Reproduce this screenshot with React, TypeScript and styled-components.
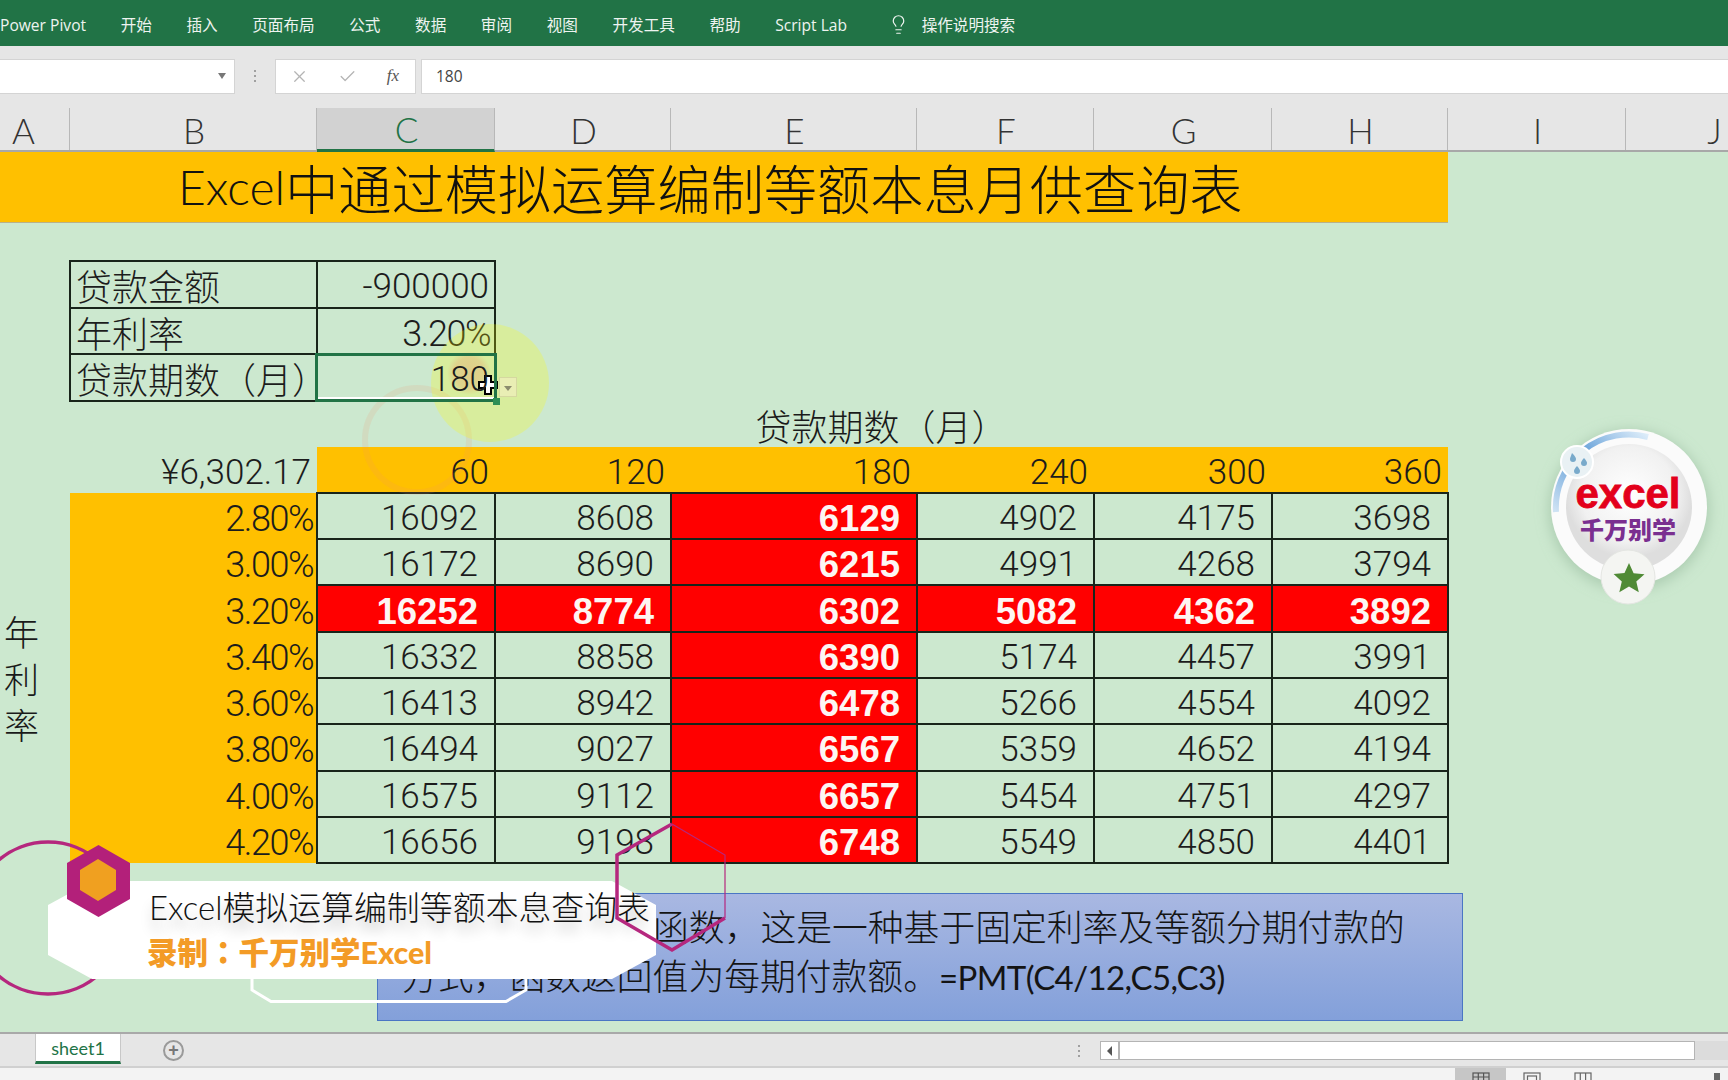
import React from "react";
import styled, { createGlobalStyle } from "styled-components";
import { Lightbulb, X, Check } from "lucide-react";

const CJK = `"Noto Sans CJK SC", sans-serif`;
const NUM = `Roboto, "Liberation Sans", "Noto Sans CJK SC", sans-serif`;
const BOLDNUM = `"Liberation Sans", "Noto Sans CJK SC", sans-serif`;
const LAT = `Lato, "Noto Sans CJK SC", sans-serif`;
const GREEN = "#217346";

const Global = createGlobalStyle`
  html, body { margin: 0; padding: 0; background: #cce8cf; overflow: hidden; }
  * { box-sizing: border-box; }
`;

const Page = styled.div`
  position: relative;
  width: 1728px;
  height: 1080px;
  overflow: hidden;
  display: flex;
  flex-direction: column;
  font-family: ${CJK};
  color: #1a1a1a;
`;

const Ribbon = styled.div`
  height: 46px;
  flex: none;
  background: ${GREEN};
  display: flex;
  align-items: center;
  gap: 34.6px;
  padding-top: 3px;
  color: #eef4f0;
  font: 15.6px ${`"Open Sans", "Noto Sans CJK SC", sans-serif`};
`;
const RibbonItem = styled.span`
  white-space: nowrap;
  display: inline-flex;
  align-items: center;
  gap: 13px;
`;
const SearchItem = styled(RibbonItem)`
  margin-left: 6px;
`;

const FormulaRow = styled.div`
  height: 62px;
  flex: none;
  background: #e6e6e6;
  display: flex;
  align-items: center;
  padding-bottom: 2px;
`;
const NameBox = styled.div`
  width: 235px;
  height: 35px;
  background: #fff;
  border: 1px solid #d4d4d4;
  border-left: 0;
  display: flex;
  align-items: center;
  justify-content: flex-end;
  padding-right: 8px;
`;
const Caret = styled.span`
  width: 0;
  height: 0;
  border-left: 4px solid transparent;
  border-right: 4px solid transparent;
  border-top: 6px solid #777;
`;
const Grip = styled.div`
  width: 40px;
  display: flex;
  flex-direction: column;
  align-items: center;
  gap: 3px;
`;
const GripDot = styled.i`
  width: 2px;
  height: 2px;
  background: #a0a0a0;
`;
const FxButtons = styled.div`
  width: 141px;
  height: 35px;
  background: #fff;
  border: 1px solid #d4d4d4;
  display: flex;
  align-items: center;
  justify-content: space-between;
  padding: 0 16px 0 14px;
  color: #b4b4b4;
`;
const FxMark = styled.span`
  font: italic 17px "Liberation Serif", serif;
  color: #555;
`;
const FormulaInput = styled.div`
  flex: 1;
  height: 35px;
  margin-left: 5px;
  background: #fff;
  border: 1px solid #d4d4d4;
  border-right: 0;
  display: flex;
  align-items: center;
  padding-left: 14px;
  font: 15.5px "Open Sans", sans-serif;
  color: #444;
`;

const COLS = "70px 247px 178px 176px 246px 177px 178px 176px";

const Headers = styled.div`
  height: 44px;
  flex: none;
  display: grid;
  grid-template-columns: ${COLS} 178px 176px;
  background: #e6e6e6;
  border-bottom: 2px solid #a8a8a8;
`;
const Head = styled.div<{ $active?: boolean; $shift?: number }>`
  display: flex;
  align-items: flex-end;
  justify-content: center;
  font: 300 35px/40px Lato, sans-serif;
  padding-left: 2px;
  padding-right: ${(p) => p.$shift ?? 0}px;
  color: ${(p) => (p.$active ? GREEN : "#333")};
  background: ${(p) => (p.$active ? "#d2d2d2" : "transparent")};
  border-right: 1px solid #b8b8b8;
  margin-bottom: ${(p) => (p.$active ? -2 : 0)}px;
  border-bottom: ${(p) => (p.$active ? `3px solid ${GREEN}` : "0")};
`;

const Sheet = styled.div`
  flex: 1;
  background: #cce8cf;
  display: grid;
  grid-template-columns: ${COLS};
  grid-template-rows: 71px 38px 46.5px 46.5px 46.5px 46px repeat(9, 46.3px) 1fr;
  align-content: start;
  overflow: hidden;
`;
const Title = styled.div`
  grid-column: 1 / -1;
  background: #ffc000;
  border-bottom: 1px solid #b9b08a;
  display: flex;
  align-items: center;
  padding-left: 178px;
  font: 300 53.2px/60px ${CJK};
  color: #111;
  white-space: nowrap;
`;
const TitleLatin = styled.span`
  font: 300 48px/60px ${LAT};
`;
const Gap = styled.div`
  grid-column: 1 / -1;
`;
const RowRest = styled.div`
  grid-column: 4 / -1;
`;
const Cell = styled.div<{ $right?: boolean; $boxed?: boolean; $fill?: string; $pad?: number }>`
  display: flex;
  align-items: center;
  justify-content: ${(p) => (p.$right ? "flex-end" : "flex-start")};
  padding: 6px ${(p) => p.$pad ?? 6}px 0 6px;
  font: 300 35px/38px ${NUM};
  color: #1c1c1c;
  white-space: nowrap;
  background: ${(p) => p.$fill ?? "transparent"};
  outline: ${(p) => (p.$boxed ? "2px solid #18241a" : "0")};
  outline-offset: -1px;
`;
const HotCell = styled(Cell)`
  font: bold 36.5px/38px ${BOLDNUM};
  color: #fdf6f3;
  background: #ff0000;
`;
const LabelCell = styled(Cell)`
  grid-column: 2;
  padding-top: 2px;
  font: 300 36px/42px ${CJK};
`;
const RateCell = styled(Cell)`
  grid-column: 2;
  padding-right: 4px;
  font: 300 36px/38px ${NUM};
  letter-spacing: -1.5px;
  background: #ffc000;
`;
const PercentValue = styled(Cell)`
  font: 300 36px/38px ${NUM};
  letter-spacing: -1.5px;
  padding-right: 5px;
`;
const SumCell = styled(Cell)`
  grid-column: 2;
  padding-right: 6px;
`;
const ActiveCell = styled(Cell)`
  position: relative;
  z-index: 2;
`;
const ActiveFrame = styled.div`
  position: absolute;
  inset: -1px -2px -1px -2px;
  border: 3px solid ${GREEN};
  box-shadow: inset 0 -2px 0 #fff;
  pointer-events: none;
`;
const FillHandle = styled.i`
  position: absolute;
  right: -5px;
  bottom: -4px;
  width: 7px;
  height: 7px;
  background: #2f8f55;
`;
const SpanHeader = styled.div`
  grid-column: 3 / -1;
  display: flex;
  align-items: center;
  justify-content: center;
  padding: 2px 2px 0 0;
  font: 300 36px/42px ${CJK};
`;
const RateSide = styled.div`
  grid-row: 8 / span 8;
  grid-column: 1;
  display: flex;
  flex-direction: column;
  justify-content: center;
  padding-left: 4px;
  font: 300 35px/46.4px ${CJK};
`;
const NoteRow = styled.div`
  grid-column: 1 / -1;
  padding: 30px 0 0 377px;
`;
const Note = styled.div`
  width: 1086px;
  height: 128px;
  border: 1.5px solid #4a76c4;
  background: linear-gradient(#a9b8e2, #83a0da);
  padding: 7px 0 0 24px;
  font: 300 35.8px/49px ${CJK};
  color: #141414;
  white-space: nowrap;
`;
const NoteLine = styled.div<{ $indent?: number }>`
  padding-left: ${(p) => p.$indent ?? 0}px;
`;
const Formula = styled.span`
  font: 33px/49px ${LAT};
  letter-spacing: -0.6px;
`;

const TabBar = styled.div`
  height: 36px;
  flex: none;
  background: #e6e6e6;
  border-top: 2px solid #a9a9a9;
  border-bottom: 2px solid #d0d0d0;
  display: flex;
  align-items: flex-start;
`;
const SheetTab = styled.div`
  margin-left: 35px;
  width: 86px;
  height: 30px;
  background: #fff;
  border-bottom: 3px solid ${GREEN};
  border-left: 1px solid #c8c8c8;
  border-right: 1px solid #c8c8c8;
  color: ${GREEN};
  font: 18px Lato, sans-serif;
  display: flex;
  align-items: center;
  justify-content: center;
`;
const AddSheet = styled.div`
  margin: 6px 0 0 42px;
  width: 21px;
  height: 21px;
  border: 2px solid #9a9a9a;
  border-radius: 50%;
  color: #777;
  font: bold 18px/16px "Liberation Sans", sans-serif;
  text-align: center;
`;
const TabSpacer = styled.div`
  flex: 1;
`;
const ScrollGrip = styled(Grip)`
  width: 10px;
  margin: 11px 16px 0 0;
`;
const Scrollbar = styled.div`
  width: 595px;
  height: 19px;
  margin-top: 7px;
  background: #fff;
  border: 1px solid #b4b4b4;
  display: flex;
`;
const ScrollBtn = styled.div`
  width: 19px;
  border-right: 2px solid #b4b4b4;
  display: flex;
  align-items: center;
  justify-content: center;
`;
const ScrollLeft = styled.span`
  width: 0;
  height: 0;
  border-top: 5px solid transparent;
  border-bottom: 5px solid transparent;
  border-right: 5px solid #555;
`;
const ScrollTail = styled.div`
  width: 33px;
  height: 19px;
  margin-top: 7px;
  background: #dcdcdc;
`;
const Status = styled.div`
  height: 12px;
  flex: none;
  background: #f3f3f3;
  display: flex;
  justify-content: flex-end;
  overflow: hidden;
`;
const ViewBtn = styled.div<{ $on?: boolean }>`
  width: 51px;
  height: 12px;
  background: ${(p) => (p.$on ? "#c6c6c6" : "transparent")};
  display: flex;
  justify-content: center;
  padding-top: 4px;
`;
const StatusTail = styled.div`
  width: 120px;
  display: flex;
  justify-content: flex-end;
  padding: 5px 8px 0 0;
`;
const Slider = styled.i`
  width: 6px;
  height: 7px;
  background: #666;
`;

const Overlay = styled.div`
  position: absolute;
  inset: 0;
  pointer-events: none;
`;
const Art = styled.svg`
  position: absolute;
  left: 0;
  top: 0;
  width: 1728px;
  height: 1080px;
`;
const Banner = styled.div`
  position: absolute;
  left: 48px;
  top: 881px;
  width: 608px;
  height: 98px;
  background: #fff;
  clip-path: polygon(44px 0, 564px 0, 608px 24px, 608px 74px, 564px 98px, 44px 98px, 0 74px, 0 24px);
  padding: 7px 0 0 101px;
  white-space: nowrap;
`;
const BannerTitle = styled.div`
  font: 300 32.9px/40px ${LAT};
  color: #111;
  text-shadow: 0 10px 12px rgba(0, 0, 0, 0.22);
`;
const BannerSub = styled.div`
  margin: 5px 0 0 -2px;
  font: 900 30.5px/38px Lato, "Noto Sans CJK TC", sans-serif;
  color: #f39b26;
`;
const Tag = styled.div`
  position: absolute;
  left: 499px;
  top: 377px;
  width: 18px;
  height: 20px;
  background: #e9eeb4;
  border: 1px solid #d5d8a0;
  display: flex;
  align-items: center;
  justify-content: center;
`;
const TagArrow = styled.span`
  width: 0;
  height: 0;
  border-left: 4px solid transparent;
  border-right: 4px solid transparent;
  border-top: 5px solid #8c8c6e;
  margin-top: 3px;
`;

const rows: [string, number[]][] = [
  ["2.80%", [16092, 8608, 6129, 4902, 4175, 3698]],
  ["3.00%", [16172, 8690, 6215, 4991, 4268, 3794]],
  ["3.20%", [16252, 8774, 6302, 5082, 4362, 3892]],
  ["3.40%", [16332, 8858, 6390, 5174, 4457, 3991]],
  ["3.60%", [16413, 8942, 6478, 5266, 4554, 4092]],
  ["3.80%", [16494, 9027, 6567, 5359, 4652, 4194]],
  ["4.00%", [16575, 9112, 6657, 5454, 4751, 4297]],
  ["4.20%", [16656, 9198, 6748, 5549, 4850, 4401]],
];
const menu = ["Power Pivot", "开始", "插入", "页面布局", "公式", "数据", "审阅", "视图", "开发工具", "帮助", "Script Lab"];
const heads = ["A", "B", "C", "D", "E", "F", "G", "H", "I", "J"];

const GridIcon = () => (
  <svg width="18" height="14" viewBox="0 0 18 14" fill="none" stroke="#555" strokeWidth="1.2">
    <rect x="1" y="1" width="16" height="12" />
    <path d="M1 5h16M6.3 1v12M11.6 1v12" />
  </svg>
);
const PageIcon = () => (
  <svg width="18" height="14" viewBox="0 0 18 14" fill="none" stroke="#666" strokeWidth="1.2">
    <rect x="1" y="1" width="16" height="12" />
    <rect x="4.5" y="4" width="9" height="8" />
  </svg>
);
const BreakIcon = () => (
  <svg width="18" height="14" viewBox="0 0 18 14" fill="none" stroke="#666" strokeWidth="1.2">
    <rect x="1" y="1" width="16" height="12" />
    <path d="M6.3 1v12M11.6 1v12" />
  </svg>
);

export default function App() {
  return (
    <Page>
      <Global />
      <Ribbon>
        {menu.map((m) => (
          <RibbonItem key={m}>{m}</RibbonItem>
        ))}
        <SearchItem>
          <Lightbulb size={21} strokeWidth={1.4} />
          操作说明搜索
        </SearchItem>
      </Ribbon>
      <FormulaRow>
        <NameBox>
          <Caret />
        </NameBox>
        <Grip>
          <GripDot />
          <GripDot />
          <GripDot />
        </Grip>
        <FxButtons>
          <X size={19} strokeWidth={1.6} />
          <Check size={19} strokeWidth={1.6} />
          <FxMark>fx</FxMark>
        </FxButtons>
        <FormulaInput>180</FormulaInput>
      </FormulaRow>
      <Headers>
        {heads.map((h) => (
          <Head key={h} $active={h === "C"} $shift={h === "A" ? 24 : 0}>
            {h}
          </Head>
        ))}
      </Headers>
      <Sheet>
        <Title>
          <TitleLatin>Excel</TitleLatin>中通过模拟运算编制等额本息月供查询表
        </Title>
        <Gap />
        <LabelCell $boxed>贷款金额</LabelCell>
        <Cell $right $boxed>-900000</Cell>
        <RowRest />
        <LabelCell $boxed>年利率</LabelCell>
        <PercentValue $right $boxed>3.20%</PercentValue>
        <RowRest />
        <LabelCell $boxed>贷款期数（月）</LabelCell>
        <ActiveCell $right>
          180
          <ActiveFrame />
          <FillHandle />
        </ActiveCell>
        <RowRest />
        <SpanHeader>贷款期数（月）</SpanHeader>
        <RateSide>
          <span>年</span>
          <span>利</span>
          <span>率</span>
        </RateSide>
        <SumCell $right>¥6,302.17</SumCell>
        {[60, 120, 180, 240, 300, 360].map((n) => (
          <Cell key={n} $right $fill="#ffc000">
            {n}
          </Cell>
        ))}
        {rows.map(([rate, vals], r) => (
          <React.Fragment key={rate}>
            <RateCell $right>{rate}</RateCell>
            {vals.map((v, c) =>
              c === 2 || r === 2 ? (
                <HotCell key={c} $right $boxed $pad={17}>
                  {v}
                </HotCell>
              ) : (
                <Cell key={c} $right $boxed $pad={17}>
                  {v}
                </Cell>
              )
            )}
          </React.Fragment>
        ))}
        <NoteRow>
          <Note>
            <NoteLine $indent={251}>函数，这是一种基于固定利率及等额分期付款的</NoteLine>
            <NoteLine>
              方式，函数返回值为每期付款额。<Formula>=PMT(C4/12,C5,C3)</Formula>
            </NoteLine>
          </Note>
        </NoteRow>
      </Sheet>
      <TabBar>
        <SheetTab>sheet1</SheetTab>
        <AddSheet>+</AddSheet>
        <TabSpacer />
        <ScrollGrip>
          <GripDot />
          <GripDot />
          <GripDot />
        </ScrollGrip>
        <Scrollbar>
          <ScrollBtn>
            <ScrollLeft />
          </ScrollBtn>
        </Scrollbar>
        <ScrollTail />
      </TabBar>
      <Status>
        <ViewBtn $on>
          <GridIcon />
        </ViewBtn>
        <ViewBtn>
          <PageIcon />
        </ViewBtn>
        <ViewBtn>
          <BreakIcon />
        </ViewBtn>
        <StatusTail>
          <Slider />
        </StatusTail>
      </Status>

      <Overlay>
        <Art viewBox="0 0 1728 1080">
          <defs>
            <radialGradient id="hotspot">
              <stop offset="0" stopColor="#f0885a" stopOpacity="0.7" />
              <stop offset="0.7" stopColor="#f0885a" stopOpacity="0.55" />
              <stop offset="1" stopColor="#f0885a" stopOpacity="0" />
            </radialGradient>
            <radialGradient id="plate" cx="0.5" cy="0.4">
              <stop offset="0" stopColor="#ffffff" />
              <stop offset="0.75" stopColor="#f1f1f1" />
              <stop offset="1" stopColor="#dedede" />
            </radialGradient>
            <linearGradient id="arc" x1="0" y1="1" x2="1" y2="0">
              <stop offset="0" stopColor="#cfe3f4" />
              <stop offset="0.5" stopColor="#5e9bd6" />
              <stop offset="1" stopColor="#dfeefa" />
            </linearGradient>
            <filter id="soft" x="-30%" y="-30%" width="160%" height="160%">
              <feGaussianBlur stdDeviation="7" />
            </filter>
          </defs>
          <circle cx="417" cy="440" r="52" fill="none" stroke="#f0906a" strokeOpacity="0.14" strokeWidth="6" />
          <circle cx="490" cy="383" r="59" fill="#ffff00" fillOpacity="0.24" />
          <circle cx="469" cy="373" r="22" fill="url(#hotspot)" fillOpacity="0.45" />
          <circle cx="48" cy="918" r="76" fill="none" stroke="#b5277e" strokeWidth="3.5" />
          <polyline points="252,975 252,990 271,1001.5 506,1001.5 526,990 526,975" fill="none" stroke="#fff" strokeWidth="3" />
          <circle cx="1629" cy="510" r="80" fill="#8fb597" fillOpacity="0.55" filter="url(#soft)" />
          <circle cx="1629" cy="507" r="78" fill="#fbfbfb" />
          <circle cx="1629" cy="507" r="63" fill="url(#plate)" />
          <path d="M1556 512 A73 73 0 0 1 1648 437" fill="none" stroke="url(#arc)" strokeWidth="6" />
          <circle cx="1577" cy="462" r="16" fill="#e9f1f4" stroke="#fff" strokeWidth="2" />
          <path d="M1572 453c3 3 4 5 4 6a3 3 0 0 1-6 0c0-1 1-3 2-6zM1584 458c2 2 3 4 3 5a3 3 0 0 1-6 0c0-1 1-3 3-5zM1577 466c2 2 3 4 3 5a3 3 0 0 1-6 0c0-1 1-3 3-5z" fill="#79aacb" />
          <text x="1628" y="508" textAnchor="middle" fontFamily="Liberation Sans, sans-serif" fontWeight="900" fontSize="42" fill="#e3001b" stroke="#e3001b" strokeWidth="0.8">excel</text>
          <text x="1628" y="539" textAnchor="middle" fontFamily="Noto Sans CJK SC, sans-serif" fontWeight="900" fontSize="24" fill="#7a2f90">千万别学</text>
          <circle cx="1628" cy="577" r="27" fill="#f4f5f2" stroke="#e4e6e2" />
          <path d="M1629 563l4.6 10.2 10.9 1-8.2 7.3 2.5 10.8-9.8-5.7-9.7 5.6 2.5-10.8-8.2-7.3 10.9-1z" fill="#4f8a35" />
        </Art>
      </Overlay>
      <Banner>
        <BannerTitle>Excel模拟运算编制等额本息查询表</BannerTitle>
        <BannerSub>录制：千万别学Excel</BannerSub>
      </Banner>
      <Overlay>
        <Art viewBox="0 0 1728 1080">
          <polygon points="98.5,845 130,863 130,899 98.5,917 67,899 67,863" fill="#b3207a" />
          <polygon points="98,859 116,870 116,890 98,901 80,890 80,870" fill="#f0a020" />
          <polyline points="672,824 617,855 617,918 672,950 725,918" fill="none" stroke="#b5277e" strokeWidth="3.5" />
          <polyline points="725,918 725,855 672,824" fill="none" stroke="#b5277e" strokeWidth="1.2" />
          <path d="M485 376h6v6h6v6h-6v6h-6v-6h-6v-6h6z" fill="#fff" stroke="#000" strokeWidth="2" />
        </Art>
      </Overlay>
      <Tag>
        <TagArrow />
      </Tag>
    </Page>
  );
}
